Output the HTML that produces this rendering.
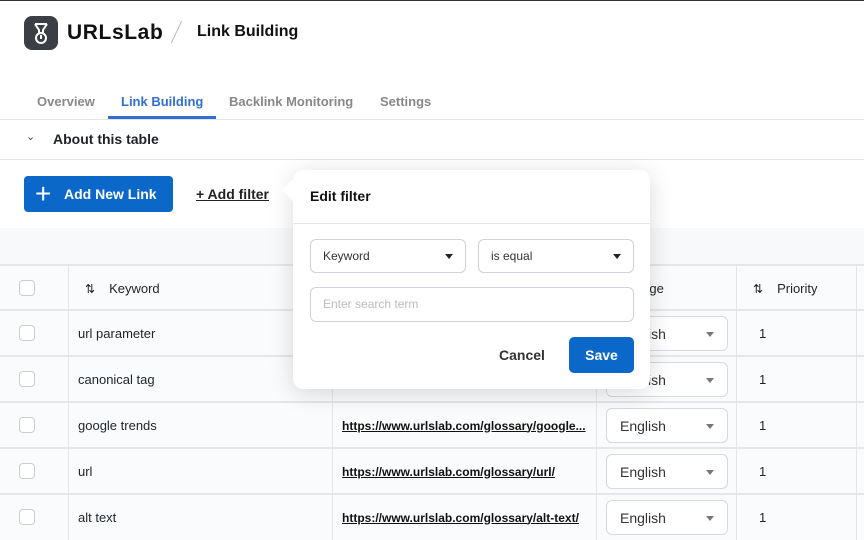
<!DOCTYPE html>
<html><head><meta charset="utf-8"><style>
*{box-sizing:border-box;margin:0;padding:0}
body{width:864px;height:538px;overflow:hidden;background:#fff;font-family:"Liberation Sans",Arial,sans-serif;color:#1f2328;position:relative}
.abs{position:absolute}
.logo{left:24px;top:16px;width:34px;height:34px;background:#3b3f45;border-radius:8px}
.brand{left:67px;top:21px;font-size:21px;font-weight:bold;letter-spacing:0.6px;color:#111}
.slash{left:176px;top:20px;width:1px;height:24px;background:#bbb;transform:rotate(25deg)}
.title{left:197px;top:23px;font-size:16px;font-weight:bold;color:#111}
.tab{top:94px;font-size:13px;font-weight:bold;color:#888}
.line{left:0;width:864px;height:1px;background:#e3e5e8}
.btn{left:24px;top:176px;width:149px;height:36px;background:#0b68c9;border-radius:4px;color:#fff;font-weight:bold;font-size:14px}
.band{left:0;top:228px;width:864px;height:37px;background:#f8f9fb}
.row{left:0;width:864px;background:#fafbfc;border-top:2px solid #e4e6e9}
.cell{position:absolute;top:0;height:100%;border-left:1px solid #e4e6e9;font-size:13px;display:flex;align-items:center;padding-left:9px}
.cb{position:absolute;left:19px;width:16px;height:16px;border:1px solid #c9ccd1;border-radius:4px;background:#fff}
.sel{position:absolute;left:9px;width:122px;height:35px;border:1px solid #d6d9dd;border-radius:6px;background:#fff;font-size:14px;padding:9px 0 0 13px;color:#333}
.sel:after{content:"";position:absolute;right:13px;top:15px;border:4px solid transparent;border-top:5px solid #777}
a{color:#111;font-weight:bold;font-size:12px;text-decoration:underline}
.pop{left:293px;top:170px;width:357px;height:219px;background:#fff;border-radius:10px;box-shadow:0 4px 24px rgba(0,0,0,.15)}
.psel{position:absolute;top:69px;width:156px;height:34px;border:1px solid #cfd3d8;border-radius:6px;font-size:12px;padding:9px 0 0 12px;color:#333}
.psel:after{content:"";position:absolute;right:12px;top:14px;border:4px solid transparent;border-top:5px solid #222}
</style></head><body>
<div class="abs" style="left:0;top:0;width:864px;height:1px;background:#333"></div>
<div class="abs logo"><svg width="34" height="34" viewBox="0 0 34 34"><path d="M11 8h12M11 8l4 6v3M23 8l-4 6v3" stroke="#fff" stroke-width="2" fill="none"/><circle cx="17" cy="22" r="5" stroke="#fff" stroke-width="2" fill="none"/><path d="M17 19v4" stroke="#fff" stroke-width="2"/></svg></div>
<div class="abs brand">URLsLab</div>
<div class="abs slash"></div>
<div class="abs title">Link Building</div>
<div class="abs tab" style="left:37px">Overview</div>
<div class="abs tab" style="left:121px;color:#2f6fd0">Link Building</div>
<div class="abs" style="left:108px;top:116px;width:108px;height:3px;background:#2f6fd0"></div>
<div class="abs tab" style="left:229px">Backlink Monitoring</div>
<div class="abs tab" style="left:380px">Settings</div>
<div class="abs line" style="top:119px"></div>
<div class="abs" style="left:26px;top:130px;font-size:11px;color:#444">&#8964;</div>
<div class="abs" style="left:53px;top:131px;font-size:14px;font-weight:bold">About this table</div>
<div class="abs line" style="top:159px"></div>
<div class="abs btn"><span style="position:absolute;left:11px;top:2px;font-size:28px;font-weight:normal">+</span><span style="position:absolute;left:40px;top:10px">Add New Link</span></div>
<div class="abs" style="left:196px;top:186px;font-size:14px;font-weight:bold;text-decoration:underline;color:#222">+ Add filter</div>
<div class="abs band"></div>
<div class="abs row" style="top:264px;height:47px;background:#fafbfc">
<div class="cb" style="top:14px"></div>
<div class="cell" style="left:68px;width:264px;padding-left:16px"><span style="font-size:12px;margin-right:14px">&#8645;</span>Keyword</div>
<div class="cell" style="left:332px;width:264px"></div>
<div class="cell" style="left:596px;width:140px">Language</div>
<div class="cell" style="left:736px;width:120px;padding-left:16px"><span style="font-size:12px;margin-right:14px">&#8645;</span>Priority</div>
<div class="cell" style="left:856px;width:8px"></div>
</div>
<div class="abs row" style="top:309px;height:47px"><div class="cb" style="top:14px"></div><div class="cell" style="left:68px;width:264px">url parameter</div><div class="cell" style="left:332px;width:264px"></div><div class="cell" style="left:596px;width:140px"><div class="sel" style="top:5px">English</div></div><div class="cell" style="left:736px;width:120px;padding-left:22px">1</div><div class="cell" style="left:856px;width:8px"></div></div>
<div class="abs row" style="top:355px;height:47px"><div class="cb" style="top:14px"></div><div class="cell" style="left:68px;width:264px">canonical tag</div><div class="cell" style="left:332px;width:264px"></div><div class="cell" style="left:596px;width:140px"><div class="sel" style="top:5px">English</div></div><div class="cell" style="left:736px;width:120px;padding-left:22px">1</div><div class="cell" style="left:856px;width:8px"></div></div>
<div class="abs row" style="top:401px;height:47px"><div class="cb" style="top:14px"></div><div class="cell" style="left:68px;width:264px">google trends</div><div class="cell" style="left:332px;width:264px"><a>https://www.urlslab.com/glossary/google...</a></div><div class="cell" style="left:596px;width:140px"><div class="sel" style="top:5px">English</div></div><div class="cell" style="left:736px;width:120px;padding-left:22px">1</div><div class="cell" style="left:856px;width:8px"></div></div>
<div class="abs row" style="top:447px;height:47px"><div class="cb" style="top:14px"></div><div class="cell" style="left:68px;width:264px">url</div><div class="cell" style="left:332px;width:264px"><a>https://www.urlslab.com/glossary/url/</a></div><div class="cell" style="left:596px;width:140px"><div class="sel" style="top:5px">English</div></div><div class="cell" style="left:736px;width:120px;padding-left:22px">1</div><div class="cell" style="left:856px;width:8px"></div></div>
<div class="abs row" style="top:493px;height:47px"><div class="cb" style="top:14px"></div><div class="cell" style="left:68px;width:264px">alt text</div><div class="cell" style="left:332px;width:264px"><a>https://www.urlslab.com/glossary/alt-text/</a></div><div class="cell" style="left:596px;width:140px"><div class="sel" style="top:5px">English</div></div><div class="cell" style="left:736px;width:120px;padding-left:22px">1</div><div class="cell" style="left:856px;width:8px"></div></div>
<div class="abs pop">
<div style="position:absolute;left:-8px;top:12px;width:16px;height:16px;background:#fff;transform:rotate(45deg)"></div>
<div style="position:absolute;left:17px;top:18px;font-size:14px;font-weight:bold;color:#111">Edit filter</div>
<div style="position:absolute;left:0;top:53px;width:357px;height:1px;background:#e3e5e8"></div>
<div class="psel" style="left:17px">Keyword</div>
<div class="psel" style="left:185px">is equal</div>
<div style="position:absolute;left:17px;top:117px;width:324px;height:35px;border:1px solid #cfd3d8;border-radius:6px;font-size:12px;padding:9px 0 0 12px;color:#bbb">Enter search term</div>
<div style="position:absolute;left:206px;top:177px;font-size:14px;font-weight:bold;color:#333">Cancel</div>
<div style="position:absolute;left:276px;top:167px;width:65px;height:36px;background:#0b68c9;border-radius:5px;color:#fff;font-size:14px;font-weight:bold;text-align:center;line-height:36px">Save</div>
</div>
</body></html>
